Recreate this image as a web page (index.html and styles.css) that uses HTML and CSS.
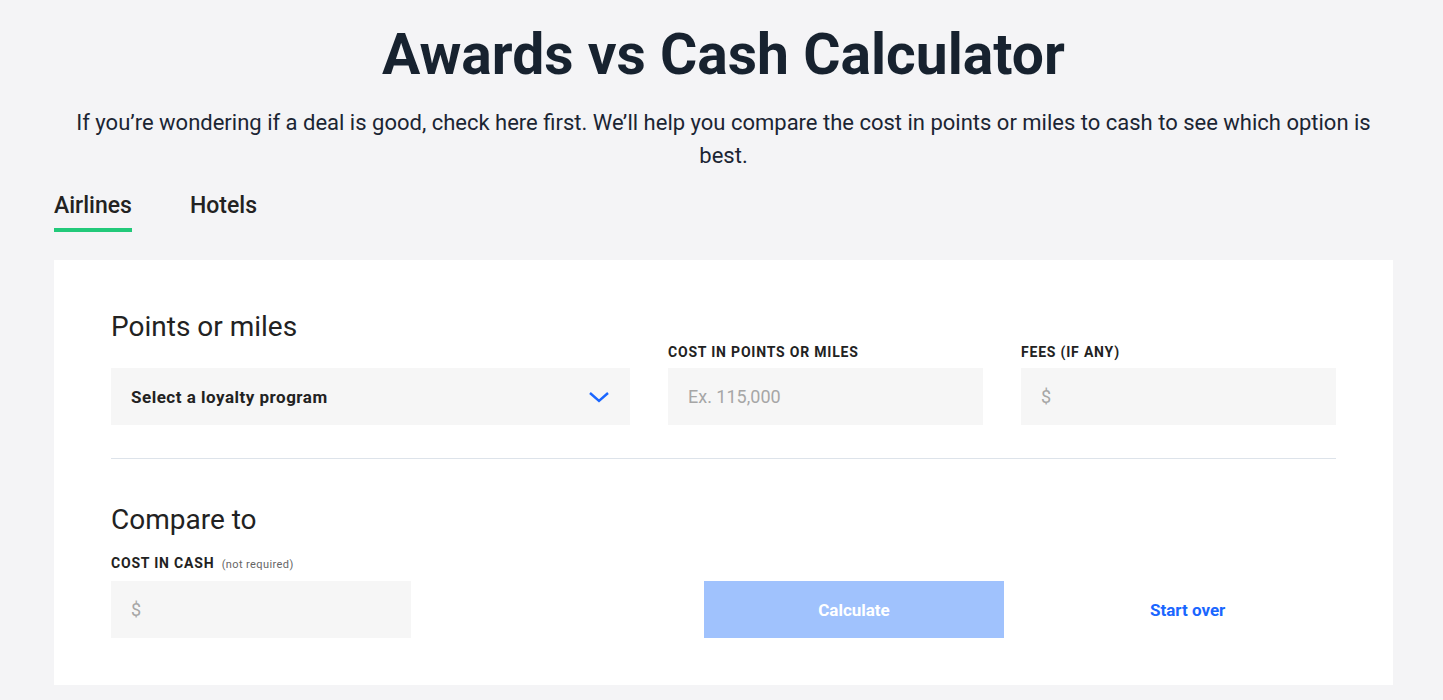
FILE: index.html
```html
<!DOCTYPE html>
<html>
<head>
  <title>Awards vs Cash Calculator</title>
  <link rel="stylesheet" href="styles.css">
</head>
<body>
  <div class="page">
    <h1 class="title">Awards vs Cash Calculator</h1>
    <p class="intro">If you’re wondering if a deal is good, check here first. We’ll help you compare the cost in points or miles to cash to see which option is best.</p>

    <div class="tabs">
      <button class="tab active">Airlines</button>
      <button class="tab">Hotels</button>
    </div>

    <div class="card">
      <div class="row-top">
        <div class="field">
          <h2 class="section-title">Points or miles</h2>
          <div class="select-box">
            <span>Select a loyalty program</span>
            <svg width="22" height="14" viewBox="0 0 22 14"><path d="M2 3 L11 11 L20 3" fill="none" stroke="#1a66ff" stroke-width="2.4"/></svg>
          </div>
        </div>
        <div class="field">
          <label class="label">Cost in points or miles</label>
          <input class="input" type="text" placeholder="Ex. 115,000">
        </div>
        <div class="field">
          <label class="label">Fees (if any)</label>
          <input class="input" type="text" placeholder="$">
        </div>
      </div>

      <hr class="divider">

      <h2 class="section-title">Compare to</h2>
      <div class="row-bottom">
        <div class="field">
          <label class="label">Cost in cash <span class="optional">(not required)</span></label>
          <input class="input" type="text" placeholder="$">
        </div>
        <button class="calc-btn">Calculate</button>
        <button class="reset-btn">Start over</button>
      </div>
    </div>
  </div>
</body>
</html>
```

FILE: styles.css
```css
body {
  margin: 0;
  background: #f4f4f6;
  font-family: Roboto, "Liberation Sans", sans-serif;
  color: #1b2533;
}

.page {
  padding: 0 50px 0 54px;
}

.title {
  margin: 0;
  padding-top: 20px;
  text-align: center;
  font-size: 57px;
  font-weight: 700;
  line-height: 70px;
  color: #17222f;
}

.intro {
  margin: 16px auto 0;
  max-width: 1320px;
  text-align: center;
  font-size: 22px;
  line-height: 33px;
  color: #1b2533;
}

.tabs {
  display: flex;
  gap: 58px;
  margin-top: 20px;
}

.tab {
  background: none;
  border: none;
  padding: 0 0 9px;
  font-family: inherit;
  font-size: 23px;
  font-weight: 500;
  color: #222;
  border-bottom: 4px solid transparent;
}

.tab.active {
  border-bottom-color: #22c97a;
}

.card {
  background: #fff;
  margin-top: 28px;
  padding: 50px 57px 47px;
}

.row-top {
  display: grid;
  grid-template-columns: 519px 1fr 1fr;
  column-gap: 38px;
  align-items: end;
}

.row-top .label {
  margin-bottom: 8px;
}

.section-title {
  margin: 0 0 24px;
  font-size: 28px;
  font-weight: 400;
  line-height: 34px;
  color: #222;
}

.select-box {
  height: 57px;
  background: #f6f6f6;
  display: flex;
  align-items: center;
  justify-content: space-between;
  padding: 0 20px;
  font-size: 17px;
  font-weight: 700;
  color: #222;
  letter-spacing: 0.5px;
}

.label {
  display: block;
  font-size: 14px;
  font-weight: 700;
  text-transform: uppercase;
  letter-spacing: 0.8px;
  color: #222;
  margin-bottom: 10px;
}

.optional {
  text-transform: none;
  font-weight: 400;
  font-size: 11px;
  letter-spacing: 0.4px;
  color: #666;
  margin-left: 3px;
}

.input {
  display: block;
  box-sizing: border-box;
  width: 100%;
  height: 57px;
  border: none;
  background: #f6f6f6;
  padding: 0 20px;
  font-family: inherit;
  font-size: 18px;
  color: #222;
}

.input::placeholder {
  color: #a6a6a6;
}

.divider {
  border: none;
  border-top: 1px solid #dde3ea;
  margin: 33px 0 44px;
}

.row-bottom {
  display: grid;
  grid-template-columns: 300px 300px auto;
  column-gap: 293px;
  align-items: end;
  margin-top: -6px;
}

.calc-btn {
  height: 57px;
  border: none;
  background: #a0c2fd;
  color: #fff;
  font-family: inherit;
  font-size: 17px;
  font-weight: 700;
}

.reset-btn {
  justify-self: start;
  height: 57px;
  border: none;
  background: none;
  color: #1a66ff;
  font-family: inherit;
  font-size: 17px;
  font-weight: 700;
  margin-left: -147px;
  padding: 0;
}
```
